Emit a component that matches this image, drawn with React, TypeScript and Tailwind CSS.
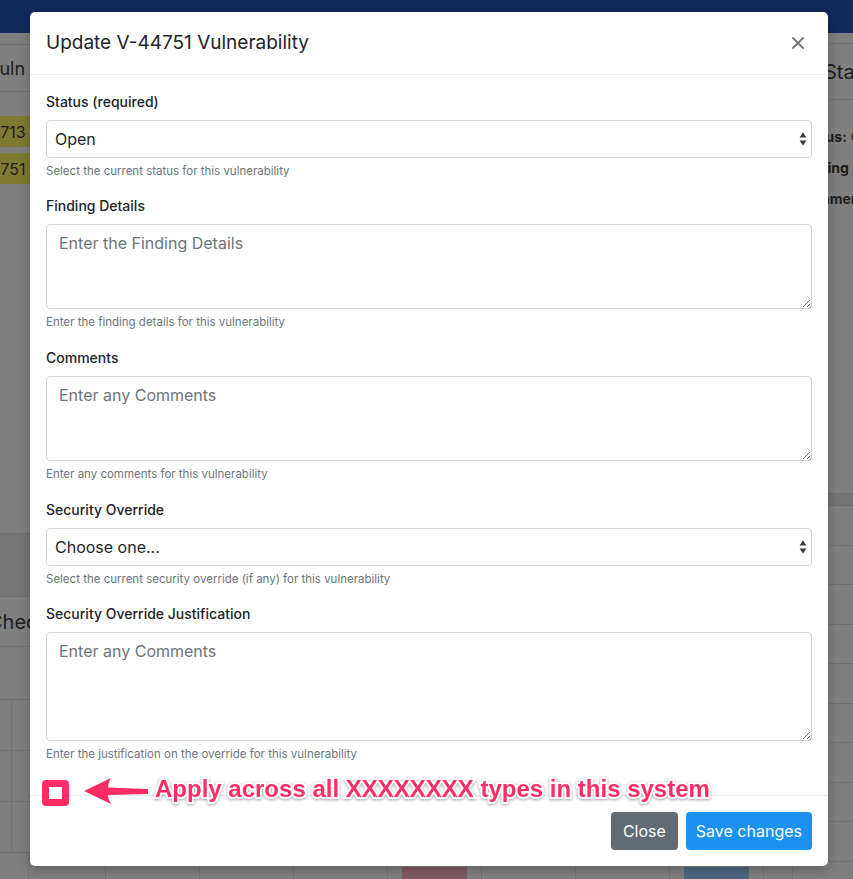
import React from 'react'

const PINK = '#ff2d64'

function SelectArrows() {
  return (
    <svg width="8" height="14" viewBox="0 0 8 14" className="pointer-events-none absolute right-[5px] top-1/2 -translate-y-1/2">
      <path d="M4 0.5 L7.5 5.5 L0.5 5.5 Z" fill="#3a3a3a" />
      <path d="M4 13.5 L7.5 8.5 L0.5 8.5 Z" fill="#3a3a3a" />
    </svg>
  )
}

function Label({ children }: { children: React.ReactNode }) {
  return <label className="mb-2 block text-[14px] font-medium leading-[21px] text-[#212529]">{children}</label>
}

function Help({ children }: { children: React.ReactNode }) {
  return <small className="mt-1 block text-[11.5px] leading-[18px] text-[#6c757d]">{children}</small>
}

function SelectField({ label, value, help }: { label: string; value: string; help: string }) {
  return (
    <div className="mb-[15px]">
      <Label>{label}</Label>
      <div className="relative">
        <select
          defaultValue={value}
          className="block h-[38px] w-full appearance-none rounded-[4px] border border-[#ced4da] bg-white pl-2 text-[16px] text-[#212529] outline-none"
        >
          <option>{value}</option>
        </select>
        <SelectArrows />
      </div>
      <Help>{help}</Help>
    </div>
  )
}

function TextField({ label, placeholder, help, tall }: { label: string; placeholder: string; help: string; tall?: boolean }) {
  return (
    <div className="mb-4">
      <Label>{label}</Label>
      <textarea
        placeholder={placeholder}
        className={`block w-full rounded-[4px] border border-[#ced4da] bg-white px-3 py-1.5 text-[16px] leading-6 text-[#212529] outline-none placeholder:text-[#6c757d] ${tall ? 'h-[109px]' : 'h-[85px]'}`}
      />
      <Help>{help}</Help>
    </div>
  )
}

function Background() {
  return (
    <div className="flex flex-col">
      <nav className="h-[33px] bg-[#13295a]" />
      <div className="flex">
        {/* left column */}
        <div className="w-[790px] shrink-0">
          <div className="h-[12px] border-b border-[#717171]" />
          <div className="flex h-[47px] items-center border-b border-[#717171] text-[18px] text-[#1c1c1c]">
            <span className="-ml-[13px]">Vuln IDs</span>
          </div>
          <div className="flex h-[441px] flex-col gap-[6px] pt-[24px]">
            <div className="-ml-[46px] flex h-[31px] w-[320px] items-center rounded-[3px] bg-[#7e7a32] pl-2 text-[16px] text-[#1c1c1c]">V-44713</div>
            <div className="-ml-[46px] flex h-[31px] w-[320px] items-center rounded-[3px] bg-[#7e7a32] pl-2 text-[16px] text-[#1c1c1c]">V-44751</div>
          </div>
          <div className="h-[64px] border-y border-[#6e6e6e] bg-[#767676]" />
          <div className="flex h-[50px] items-center border-b border-[#727272] text-[20px] text-[#1c1c1c]">
            <span className="-ml-[12px]">Checklist</span>
          </div>
          <div className="h-[53px] border-b border-[#727272]" />
          <div className="grid grid-cols-[12px_repeat(8,94px)_1fr]">
            {Array.from({ length: 30 }).map((_, i) => (
              <div key={i} className="h-[51px] border-b border-r border-[#727272]" />
            ))}
            {Array.from({ length: 10 }).map((_, i) => (
              <div key={`c-${i}`} className="h-[60px] border-r border-[#727272] p-[14px]">
                {i === 5 && <div className="h-full bg-[#805a63]" />}
                {i === 8 && <div className="h-full bg-[#4e6680]" />}
              </div>
            ))}
          </div>
        </div>
        {/* right column */}
        <div className="flex-1">
          <div className="h-[11px] border-b border-[#717171]" />
          <div className="flex h-[56px] items-center border-b border-[#717171] pl-[34px] text-[20px] text-[#1c1c1c]">Status</div>
          <div className="flex h-[393px] flex-col pl-[8px] pt-[21px] text-[14px] leading-[31px] text-[#1c1c1c]">
            <p className="whitespace-nowrap"><b>Status:</b> Open</p>
            <p className="whitespace-nowrap font-bold">Finding Details</p>
            <p className="whitespace-nowrap font-bold">Comments</p>
          </div>
          <div className="h-[13px] border-y border-[#6e6e6e] bg-[#757575]" />
          {Array.from({ length: 10 }).map((_, i) => (
            <div key={i} className="h-[39.5px] border-b border-[#727272]" />
          ))}
        </div>
      </div>
    </div>
  )
}

export default function App() {
  return (
    <div className="relative h-[879px] w-full overflow-hidden bg-[#7f7f7f] font-['Inter',sans-serif]">
      <Background />

      {/* modal */}
      <div className="absolute left-[30px] top-[12px] w-[798px] rounded-[5px] bg-white shadow-[0_3px_12px_rgba(0,0,0,0.25)]">
        <div className="flex items-center justify-between border-b border-[#e9ecef] p-4">
          <h5 className="text-[19px] font-normal leading-[30px] text-[#212529]">Update V-44751 Vulnerability</h5>
          <button className="mr-[2px] flex h-6 w-6 items-center justify-center">
            <svg width="12" height="12" viewBox="0 0 12 12">
              <path d="M1 1 L11 11 M11 1 L1 11" stroke="#777" strokeWidth="1.9" strokeLinecap="round" />
            </svg>
          </button>
        </div>

        <div className="p-4">
          <SelectField label="Status (required)" value="Open" help="Select the current status for this vulnerability" />
          <TextField label="Finding Details" placeholder="Enter the Finding Details" help="Enter the finding details for this vulnerability" />
          <TextField label="Comments" placeholder="Enter any Comments" help="Enter any comments for this vulnerability" />
          <SelectField label="Security Override" value="Choose one..." help="Select the current security override (if any) for this vulnerability" />
          <TextField label="Security Override Justification" placeholder="Enter any Comments" help="Enter the justification on the override for this vulnerability" tall />
        </div>

        <div className="flex justify-end gap-2 border-t border-[#e9ecef] p-4">
          <button className="h-[38px] rounded-[4px] bg-[#636b72] px-3 text-[16px] text-white">Close</button>
          <button className="h-[38px] rounded-[4px] bg-[#1b92f0] px-[10px] text-[16px] text-white">Save changes</button>
        </div>
      </div>

      {/* annotation */}
      <div className="absolute left-[42px] top-[780px] h-[26px] w-[27px] rounded-[4px] border-[7px] border-[#ff2d64] bg-white" />
      <svg className="absolute left-[80px] top-[774px]" width="72" height="34" viewBox="80 774 72 34">
        <path d="M84 791 L111 778 C109 782 108 785 108 787.5 L148 789 L148 794 L108 795 C108 797.5 109 800 111 804 Z" fill={PINK} />
      </svg>
      <div
        className="absolute left-[155px] top-[775px] whitespace-nowrap font-['Liberation_Sans',Arial,sans-serif] text-[24px] font-bold leading-[28px] [paint-order:stroke_fill] [-webkit-text-stroke:4px_#fff] [filter:drop-shadow(0_1px_1.5px_rgba(0,0,0,0.35))]"
        style={{ color: PINK }}
      >
        Apply across all XXXXXXXX types in this system
      </div>
    </div>
  )
}
